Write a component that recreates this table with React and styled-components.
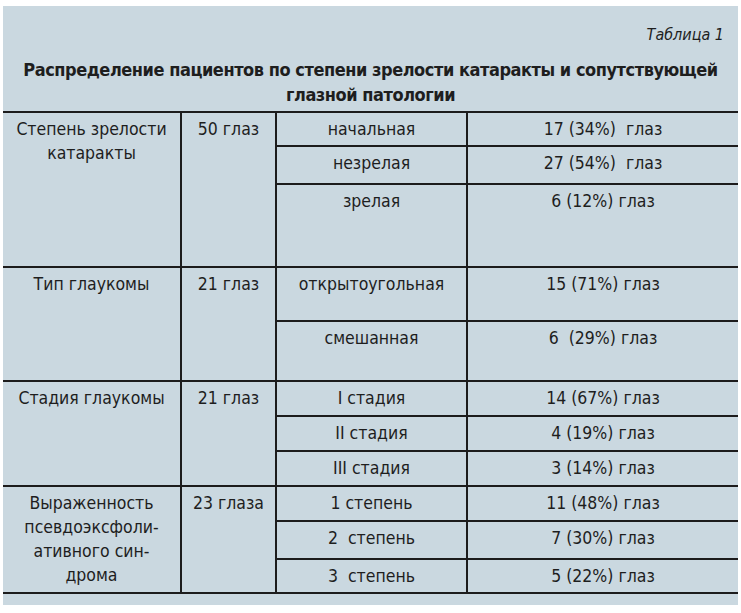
import React from "react";
import styled, { createGlobalStyle } from "styled-components";

const Global = createGlobalStyle`
  html, body { margin: 0; padding: 0; background: #ffffff; }
`;

const Page = styled.div`
  width: 741px;
  height: 613px;
  box-sizing: border-box;
  padding: 6px 3px 0 3px;
`;

const Panel = styled.section`
  width: 735px;
  height: 599px;
  background: #cad8e0;
  color: #1e1e1e;
  font-family: "DejaVu Sans Condensed", "Liberation Sans", sans-serif;
  display: flex;
  flex-direction: column;
`;

const Header = styled.header`
  height: 105px;
  box-sizing: border-box;
  padding: 17px 14px 0 14px;
  display: flex;
  flex-direction: column;
`;

const Caption = styled.div`
  align-self: flex-end;
  font-style: italic;
  font-size: 16px;
  line-height: 24px;
`;

const Title = styled.h2`
  margin: 10px 0 0;
  text-align: center;
  font-weight: 700;
  font-size: 18px;
  letter-spacing: -0.45px;
  line-height: 25px;
`;

const Grid = styled.div`
  display: grid;
  grid-template-columns: 177px 95px 191px 272px;
  grid-template-rows: 34px 38px 83px 54px 60px 35px 35px 35px 35px 38px 34px;
  border-bottom: 2px solid #1c1c1c;
`;

const Cell = styled.div`
  box-sizing: border-box;
  grid-row: span ${(p) => p.$span || 1};
  border-top: ${(p) => (p.$top ? "2px solid #1c1c1c" : "none")};
  border-left: ${(p) => (p.$left ? "2px solid #1c1c1c" : "none")};
  padding-top: 4px;
  text-align: center;
  font-size: 17.5px;
  line-height: 24px;
  white-space: pre-wrap;
`;

const groups = [
  {
    name: "Степень зрелости\nкатаракты",
    count: "50 глаз",
    rows: [
      ["начальная", "17 (34%)  глаз"],
      ["незрелая", "27 (54%)  глаз"],
      ["зрелая", "6 (12%) глаз"],
    ],
  },
  {
    name: "Тип глаукомы",
    count: "21 глаз",
    rows: [
      ["открытоугольная", "15 (71%) глаз"],
      ["смешанная", "6  (29%) глаз"],
    ],
  },
  {
    name: "Стадия глаукомы",
    count: "21 глаз",
    rows: [
      ["I стадия", "14 (67%) глаз"],
      ["II стадия", "4 (19%) глаз"],
      ["III стадия", "3 (14%) глаз"],
    ],
  },
  {
    name: "Выраженность\nпсевдоэксфоли-\nативного син-\nдрома",
    count: "23 глаза",
    rows: [
      ["1 степень", "11 (48%) глаз"],
      ["2  степень", "7 (30%) глаз"],
      ["3  степень", "5 (22%) глаз"],
    ],
  },
];

export default function App() {
  return (
    <>
      <Global />
      <Page>
        <Panel>
          <Header>
            <Caption>Таблица 1</Caption>
            <Title>
              Распределение пациентов по степени зрелости катаракты и сопутствующей
              глазной патологии
            </Title>
          </Header>
          <Grid>
            {groups.map((g, gi) => (
              <React.Fragment key={gi}>
                <Cell $span={g.rows.length} $top>
                  {g.name}
                </Cell>
                <Cell $span={g.rows.length} $top $left>
                  {g.count}
                </Cell>
                {g.rows.map((r, ri) => (
                  <React.Fragment key={ri}>
                    <Cell $top $left>
                      {r[0]}
                    </Cell>
                    <Cell $top $left>
                      {r[1]}
                    </Cell>
                  </React.Fragment>
                ))}
              </React.Fragment>
            ))}
          </Grid>
        </Panel>
      </Page>
    </>
  );
}
